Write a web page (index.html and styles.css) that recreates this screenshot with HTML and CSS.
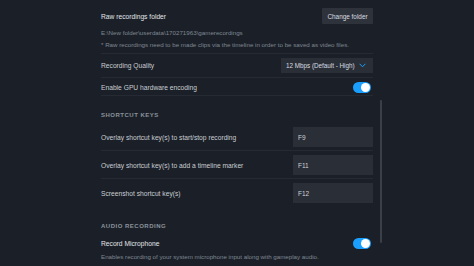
FILE: index.html
```html
<!DOCTYPE html>
<html lang="en">
<head>
  <meta charset="UTF-8" />
  <title>Game Recording</title>
  <link rel="stylesheet" href="styles.css">
</head>
<body>
<div class="wrap">
  <div class="content">
    <div class="block first">
      <div class="row-head">
        <span class="label bright">Raw recordings folder</span>
        <button class="btn" type="button">Change folder</button>
      </div>
      <div class="sub path">E:\New folder\userdata\170271963\gamerecordings</div>
      <div class="sub note">* Raw recordings need to be made clips via the timeline in order to be saved as video files.</div>
    </div>

    <div class="row quality">
      <span class="label">Recording Quality</span>
      <div class="dropdown">
        <span>12 Mbps (Default - High)</span>
        <svg width="7" height="5" viewBox="0 0 7 5"><path d="M0.6 0.8 L3.5 3.8 L6.4 0.8" fill="none" stroke="#1a9fff" stroke-width="1"/></svg>
      </div>
    </div>

    <div class="row gpu">
      <span class="label">Enable GPU hardware encoding</span>
      <div class="toggle"><div class="knob"></div></div>
    </div>

    <div class="section">SHORTCUT KEYS</div>

    <div class="row key first-key">
      <span class="label">Overlay shortcut key(s) to start/stop recording</span>
      <div class="input">F9</div>
    </div>
    <div class="row key">
      <span class="label">Overlay shortcut key(s) to add a timeline marker</span>
      <div class="input">F11</div>
    </div>
    <div class="row key last">
      <span class="label">Screenshot shortcut key(s)</span>
      <div class="input">F12</div>
    </div>

    <div class="section audio">AUDIO RECORDING</div>

    <div class="row mic">
      <span class="label bright">Record Microphone</span>
      <div class="toggle"><div class="knob"></div></div>
    </div>
    <div class="sub enables">Enables recording of your system microphone input along with gameplay audio.</div>
  </div>
  <div class="scrollbar"><div class="thumb"></div></div>
</div>
</body>
</html>
```

FILE: styles.css
```css
body {
  margin: 0;
  background: #1b2028;
  font-family: "Liberation Sans", Arial, sans-serif;
  height: 266px;
  overflow: hidden;
}

.wrap {
  display: flex;
  padding-left: 101px;
  gap: 7px;
}

.content {
  width: 272px;
}

.label {
  font-size: 6.7px;
  color: #c9cdd2;
  white-space: nowrap;
}

.bright {
  color: #e2e5e8;
}

.block.first {
  padding-top: 8px;
  padding-bottom: 3px;
  border-bottom: 1px solid #262b33;
}

.row-head {
  display: flex;
  justify-content: space-between;
  align-items: center;
  height: 16px;
}

.btn {
  height: 16px;
  width: 51px;
  padding: 0;
  border: none;
  border-radius: 1px;
  background: #2e333b;
  color: #d9dce0;
  font-family: "Liberation Sans", Arial, sans-serif;
  font-size: 6.4px;
}

.sub {
  font-size: 6.2px;
  color: #7f8791;
  line-height: 10px;
  white-space: nowrap;
}

.path {
  margin-top: 4px;
}

.note {
  margin-top: 2px;
}

.row {
  display: flex;
  justify-content: space-between;
  align-items: center;
  border-bottom: 1px solid #262b33;
}

.quality {
  padding: 4px 0 4px;
}

.dropdown {
  display: flex;
  align-items: center;
  gap: 4px;
  height: 15px;
  padding: 0 6px 0 5px;
  width: 81px;
  background: #2a2f37;
  color: #d9dce0;
  font-size: 6.3px;
}

.gpu {
  padding: 4px 0 2px;
}

.toggle {
  display: flex;
  justify-content: flex-end;
  align-items: center;
  width: 18px;
  height: 11px;
  margin-right: 2px;
  border-radius: 6px;
  background: #1a9fff;
}

.knob {
  width: 9px;
  height: 9px;
  margin-right: 1px;
  border-radius: 50%;
  background: #ffffff;
}

.section {
  margin-top: 14px;
  font-size: 6px;
  font-weight: bold;
  letter-spacing: 0.5px;
  color: #8b939c;
  line-height: 10px;
}

.key {
  padding: 4px 0 3px;
}

.first-key {
  margin-top: 3px;
}

.key.last {
  border-bottom: none;
  padding-bottom: 4px;
}

.input {
  width: 75px;
  height: 20px;
  padding-left: 5px;
  display: flex;
  align-items: center;
  background: #2a2e36;
  color: #cdd1d6;
  font-size: 6.5px;
}

.audio {
  margin-top: 14px;
}

.mic {
  border-bottom: none;
  padding-top: 7px;
}

.enables {
  margin-top: 3px;
}

.scrollbar {
  width: 2px;
}

.thumb {
  margin-top: 100px;
  height: 143px;
  background: #3b4048;
  border-radius: 1px;
}
```
